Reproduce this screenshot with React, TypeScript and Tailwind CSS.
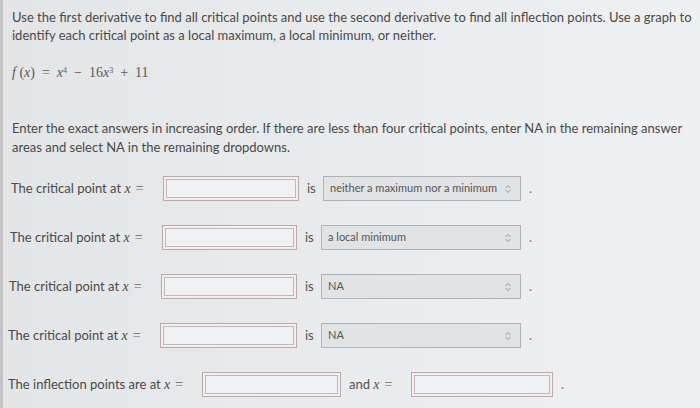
import React from "react";

const Arrow = () => (
  <svg width="8" height="10" viewBox="0 0 8 10" className="shrink-0">
    <path d="M1.5 4 L4 1.5 L6.5 4" fill="none" stroke="#b5b5b5" strokeWidth="1.1" />
    <path d="M1.5 6 L4 8.5 L6.5 6" fill="none" stroke="#b5b5b5" strokeWidth="1.1" />
  </svg>
);

const Input = ({ w }: { w: string }) => (
  <div className={`${w} h-[25px] border border-[#bda9ad] p-[2px] bg-[#eef0f1]`}>
    <div className="w-full h-full border border-[#c9b5b9] bg-[#eff1f2]" />
  </div>
);

const Select = ({ label, w }: { label: string; w: string }) => (
  <div className={`${w} h-[25px] border border-[#b3b3b3] bg-[#e2e3e4] flex items-center justify-between pl-[6px] pr-[8px] text-[11px] text-[#555] whitespace-nowrap`}>
    <span>{label}</span>
    <Arrow />
  </div>
);

const Eq = ({ v = "x" }: { v?: string }) => (
  <>
    <span className="italic font-['Liberation_Serif',serif] text-[14px]">{v}</span>
    <span className="font-['Liberation_Serif',serif] text-[14px] text-[#666] ml-[5px]">=</span>
  </>
);

const Row = ({ sel, selW, ml, inputW }: { sel: string; selW: string; ml: string; inputW: string }) => (
  <div className={`flex items-center h-[25px] ${ml}`}>
    <div className="w-[152px] shrink-0 text-[#4a4a4a] whitespace-nowrap">
      The critical point at <Eq />
    </div>
    <Input w={inputW} />
    <span className="ml-[8px] w-[16px] text-[#555]">is</span>
    <Select label={sel} w={selW} />
    <span className="ml-[8px] text-[#777]">.</span>
  </div>
);

export default function App() {
  return (
    <div className="w-[700px] h-[408px] overflow-hidden bg-gradient-to-r from-[#e3e5e7] via-[#e9ebec] to-[#eef0f1] font-['Lato','Open_Sans',sans-serif] text-[13px] text-[#4a4a4a] relative">
      <div className="absolute left-0 top-0 bottom-0 w-[3px] bg-[#c4c4c4]" />
      <div className="pl-[12px] pt-[8px]">
        <p className="leading-[18px]">
          Use the first derivative to find all critical points and use the second derivative to find all inflection points. Use a graph to identify each critical point as a local maximum, a local minimum, or neither.
        </p>
        <p className="mt-[20px] leading-[18px] font-['Liberation_Serif',serif] text-[14px] text-[#5a5a5a] whitespace-pre">
          <span className="italic">f</span> (<span className="italic">x</span>)  =  <span className="italic">x</span><sup className="text-[8px]">4</sup>  −  16<span className="italic">x</span><sup className="text-[8px]">3</sup>  +  11
        </p>
        <p className="mt-[37px] leading-[19px] pr-[10px]">
          Enter the exact answers in increasing order. If there are less than four critical points, enter NA in the remaining answer areas and select NA in the remaining dropdowns.
        </p>
      </div>
      <div className="flex flex-col mt-[19px] gap-[24px]">
        <Row sel="neither a maximum nor a minimum" selW="w-[198px]" ml="ml-[11px]" inputW="w-[136px]" />
        <Row sel="a local minimum" selW="w-[200px]" ml="ml-[10px]" inputW="w-[135px]" />
        <Row sel="NA" selW="w-[200px]" ml="ml-[9px]" inputW="w-[136px]" />
        <Row sel="NA" selW="w-[200px]" ml="ml-[8px]" inputW="w-[137px]" />
        <div className="flex items-center h-[25px] ml-[8px]">
          <div className="w-[194px] shrink-0 text-[#4a4a4a] whitespace-nowrap">
            The inflection points are at <Eq />
          </div>
          <Input w="w-[139px]" />
          <div className="ml-[8px] w-[62px] text-[#555] whitespace-nowrap">
            and <Eq />
          </div>
          <Input w="w-[142px]" />
          <span className="ml-[8px] text-[#777]">.</span>
        </div>
      </div>
    </div>
  );
}
